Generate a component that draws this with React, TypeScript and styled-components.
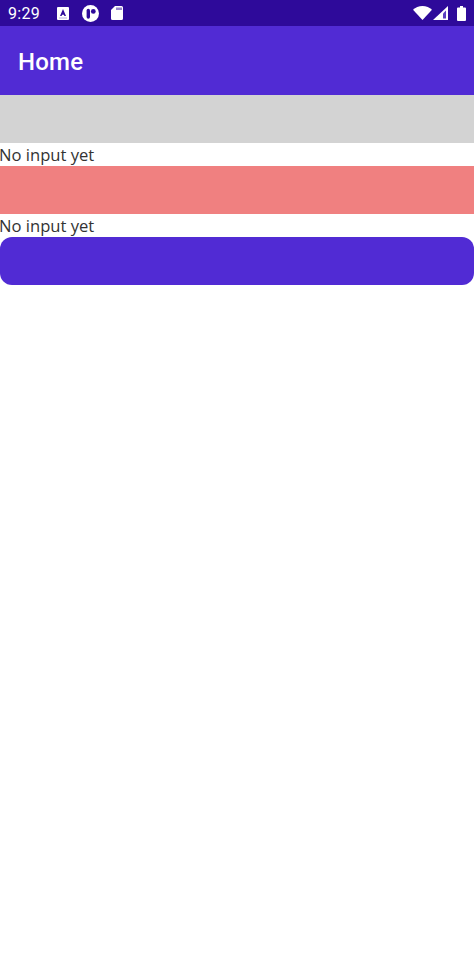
import styled, { createGlobalStyle } from 'styled-components';

const GlobalStyle = createGlobalStyle`
    html, body {
        margin: 0;
        padding: 0;
        background-color: #ffffff;
    }
`;

const Screen = styled.div`
    width: 474px;
    height: 971px;
    display: flex;
    flex-direction: column;
    background-color: #ffffff;
    overflow: hidden;
`;

const StatusBar = styled.div`
    height: 26px;
    flex-shrink: 0;
    display: flex;
    align-items: center;
    justify-content: space-between;
    padding: 0 8px;
    background-color: #2e0a9a;
    color: #ffffff;
`;

const StatusGroup = styled.div`
    display: flex;
    align-items: center;
`;

const Clock = styled.span`
    font-family: 'Roboto', sans-serif;
    font-size: 16px;
    width: 49px;
    letter-spacing: 0.3px;
`;

const StatusIcon = styled.svg<{ $gap?: number }>`
    display: block;
    margin-right: ${({ $gap }) => $gap ?? 0}px;
`;

const AppBar = styled.div`
    height: 69px;
    flex-shrink: 0;
    display: flex;
    align-items: center;
    padding: 3px 0 0 18px;
    box-sizing: border-box;
    background-color: #512bd4;
`;

const Title = styled.h1`
    margin: 0;
    font-family: 'Roboto', sans-serif;
    font-size: 24px;
    font-weight: 500;
    letter-spacing: 0.2px;
    color: #ffffff;
`;

const ColorBand = styled.div<{ $color: string }>`
    height: 48px;
    flex-shrink: 0;
    background-color: ${({ $color }) => $color};
`;

const Message = styled.div`
    height: 23px;
    flex-shrink: 0;
    font-family: 'Open Sans', sans-serif;
    font-size: 16.6px;
    line-height: 23px;
    text-indent: -1px;
    color: #333333;
`;

const ActionButton = styled.button`
    height: 48px;
    flex-shrink: 0;
    border: none;
    padding: 0;
    border-radius: 12px;
    background-color: #512bd4;
`;

function App() {
    return (
        <Screen>
            <GlobalStyle />
            <StatusBar>
                <StatusGroup>
                    <Clock>9:29</Clock>
                    <StatusIcon $gap={13} width="12" height="13" viewBox="0 0 12 13">
                        <path d="M1 0h10a1 1 0 0 1 1 1v11a1 1 0 0 1-1 1H1a1 1 0 0 1-1-1V1a1 1 0 0 1 1-1z" fill="#ffffff" />
                        <path d="M6 2 3 9h1.600l.5-1.300h1.800l.5 1.300H9L6 2z" fill="#2e0a9a" />
                        <path d="M2 10.500h8v1H2z" fill="#b9aee0" />
                    </StatusIcon>
                    <StatusIcon $gap={12} width="17" height="17" viewBox="0 0 17 17">
                        <circle cx="8.500" cy="8.500" r="8.500" fill="#ffffff" />
                        <rect x="4.600" y="3.800" width="3.400" height="10" rx="1.700" fill="#2e0a9a" />
                        <circle cx="11.300" cy="6.400" r="2.400" fill="#2e0a9a" />
                    </StatusIcon>
                    <StatusIcon width="12" height="14" viewBox="0 0 12 14">
                        <path d="M4 0h6.500A1.500 1.500 0 0 1 12 1.500v11a1.500 1.500 0 0 1-1.500 1.500h-9A1.500 1.500 0 0 1 0 12.500V4z" fill="#ffffff" />
                        <path d="M5.500 1.500h1v2.500h-1zM7.500 1.500h1v2.500h-1zM9.500 1.500h1v2.500h-1z" fill="#2e0a9a" />
                    </StatusIcon>
                </StatusGroup>
                <StatusGroup>
                    <StatusIcon $gap={1} width="19" height="14" viewBox="0 0 19 14">
                        <path d="M0 3.700C2.400 1.400 5.800 0 9.500 0s7.100 1.400 9.500 3.700L9.500 14z" fill="#ffffff" />
                    </StatusIcon>
                    <StatusIcon $gap={9} width="15" height="14" viewBox="0 0 15 14">
                        <path d="M15 0v14H0z" fill="#ffffff" />
                        <path d="M13 4.500v8h-3V7.500z" fill="#5a3fc0" />
                    </StatusIcon>
                    <StatusIcon width="9" height="15" viewBox="0 0 9 15">
                        <path d="M3 0h3v1.500h2a1 1 0 0 1 1 1V14a1 1 0 0 1-1 1H1a1 1 0 0 1-1-1V2.500a1 1 0 0 1 1-1h2z" fill="#ffffff" />
                    </StatusIcon>
                </StatusGroup>
            </StatusBar>
            <AppBar>
                <Title>Home</Title>
            </AppBar>
            <ColorBand $color="#d3d3d3" />
            <Message>No input yet</Message>
            <ColorBand $color="#f08080" />
            <Message>No input yet</Message>
            <ActionButton />
        </Screen>
    );
}

export default App;
